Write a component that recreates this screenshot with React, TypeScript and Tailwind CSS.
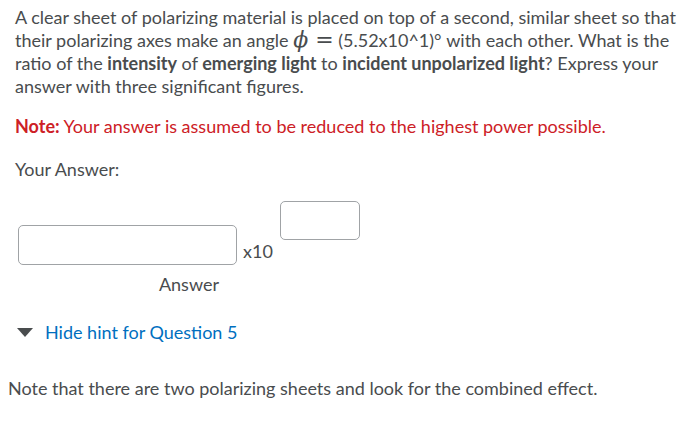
import React from 'react';

const App: React.FC = () => {
  return (
    <div className="w-[700px] h-[437px] bg-white text-[#494c4e] overflow-hidden" style={{ fontFamily: 'Lato, "Open Sans", sans-serif' }}>
      {/* Question */}
      <div className="pl-[15px] pr-[12px] pt-[6px]">
        <p className="text-[18px] leading-[23px]">
          A clear sheet of polarizing material is placed on top of a second, similar sheet so that their polarizing axes make an angle{' '}
          <span className="text-[22px] leading-none" style={{ fontFamily: '"DejaVu Serif", "Liberation Serif", serif' }}>
            <i>ϕ</i> =
          </span>{' '}
          (5.52x10^1)° with each other. What is the ratio of the <b>intensity</b> of <b>emerging light</b> to <b>incident unpolarized light</b>? Express your answer with three significant figures.
        </p>
        <p className="text-[18px] leading-[23px] text-[#cd2026] mt-[17px]">
          <b>Note:</b> Your answer is assumed to be reduced to the highest power possible.
        </p>
        <p className="text-[18px] leading-[23px] mt-[20px]">Your Answer:</p>
      </div>

      {/* Answer inputs */}
      <div className="flex flex-col items-center w-fit ml-[18px] mt-[20px]">
        <div className="flex items-start">
          <div className="mt-[24px] w-[219px] h-[40px] border border-[#a0a3a6] rounded-[5px]" />
          <div className="text-[18px] leading-[23px] ml-[6px] mt-[39px]">x10</div>
          <div className="ml-[7px] w-[80px] h-[39px] border border-[#a0a3a6] rounded-[5px]" />
        </div>
        <div className="text-[18px] leading-[23px] mt-[8px]">Answer</div>
      </div>

      {/* Hint */}
      <div className="flex items-center pl-[17px] mt-[25px]">
        <svg width="16" height="9" viewBox="0 0 16 9" className="mr-[12px]">
          <path d="M0 0 L16 0 L8 9 Z" fill="#494c4e" />
        </svg>
        <span className="text-[18px] leading-[23px] text-[#006fbf]">Hide hint for Question 5</span>
      </div>

      <p className="text-[18px] leading-[23px] pl-[8px] mt-[33px]">
        Note that there are two polarizing sheets and look for the combined effect.
      </p>
    </div>
  );
};

export default App;
